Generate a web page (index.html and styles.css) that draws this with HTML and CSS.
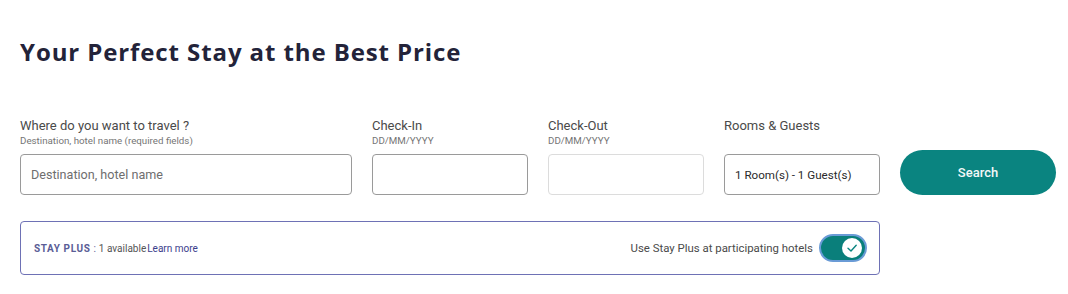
FILE: index.html
```html
<!DOCTYPE html>
<html>
<head>
<meta charset="utf-8">
<link rel="stylesheet" href="styles.css">
</head>
<body>
<div class="page">
  <h1 class="title">Your Perfect Stay at the Best Price</h1>
  <div class="form">
    <div class="field field-dest">
      <div class="label">Where do you want to travel ?</div>
      <div class="sub">Destination, hotel name (required fields)</div>
      <div class="input dark"><span class="ph">Destination, hotel name</span></div>
    </div>
    <div class="field">
      <div class="label">Check-In</div>
      <div class="sub">DD/MM/YYYY</div>
      <div class="input dark"></div>
    </div>
    <div class="field">
      <div class="label">Check-Out</div>
      <div class="sub">DD/MM/YYYY</div>
      <div class="input light"></div>
    </div>
    <div class="field">
      <div class="label">Rooms &amp; Guests</div>
      <div class="sub"></div>
      <div class="input dark"><span class="val">1 Room(s) - 1 Guest(s)</span></div>
    </div>
    <div class="field field-btn">
      <button class="search">Search</button>
    </div>
  </div>
  <div class="plus">
    <div class="plus-left">
      <span class="plus-name">STAY PLUS</span><span class="plus-colon">:</span><span class="plus-count">1 available</span><span class="plus-link">Learn more</span>
    </div>
    <div class="plus-right">
      <span class="plus-use">Use Stay Plus at participating hotels</span>
      <span class="toggle"><span class="knob"><svg width="14" height="14" viewBox="0 0 14 14"><path d="M3 7.2 L6 10 L11.2 4.2" fill="none" stroke="#0a8480" stroke-width="1.4" stroke-linecap="round" stroke-linejoin="round"/></svg></span></span>
    </div>
  </div>
</div>
</body>
</html>
```
FILE: styles.css
```css
* { box-sizing: border-box; }
html, body { margin: 0; background: #fff; }
body { font-family: Roboto, "Liberation Sans", sans-serif; }
.page { padding: 36px 20px 0 20px; }
.title {
  margin: 0;
  font-family: "Open Sans", "DejaVu Sans", sans-serif;
  font-weight: 700;
  font-size: 24px;
  line-height: 32px;
  color: #232339;
  letter-spacing: 0.9px;
}
.form {
  margin-top: 50px;
  display: grid;
  grid-template-columns: 332px 156px 156px 156px 156px;
  column-gap: 20px;
  align-items: end;
}
.field { display: flex; flex-direction: column; }
.label { font-size: 13px; line-height: 16px; color: #4a4a4a; }
.sub { font-size: 9.75px; line-height: 12px; color: #757575; height: 12px; margin-top: 1px; margin-bottom: 7px; }
.input {
  height: 41px;
  border-radius: 4px;
  background: #fff;
  display: flex;
  align-items: center;
  padding-left: 10px;
}
.input.dark { border: 1px solid #9a9a9a; }
.input.light { border: 1px solid #dcdcdc; }
.ph { font-size: 12.6px; color: #6e6e6e; }
.val { font-size: 11.6px; color: #2a2a2a; }
.search {
  height: 45px;
  width: 156px;
  border: none;
  border-radius: 23px;
  background: #0a8480;
  color: #f2f8f8;
  font-family: Roboto, "Liberation Sans", sans-serif;
  font-size: 13px;
  font-weight: 500;
  margin-bottom: 0;
}
.plus {
  margin-top: 26px;
  width: 860px;
  height: 54px;
  border: 1px solid #6e71b5;
  border-radius: 4px;
  display: flex;
  align-items: center;
  justify-content: space-between;
  padding: 0 12px 0 13px;
}
.plus-left { font-size: 10px; color: #555; }
.plus-name { font-weight: 700; letter-spacing: 0.6px; color: #5a5d96; }
.plus-colon { color: #5a5d96; margin: 0 3px; }
.plus-count { color: #555; margin-right: 1px; }
.plus-link { color: #3b3e8c; }
.plus-right { display: flex; align-items: center; gap: 6px; }
.plus-use { font-size: 11.4px; color: #4a4a4a; }
.toggle {
  width: 48px;
  height: 28px;
  border-radius: 14px;
  background: #0a7f7b;
  border: 2px solid #6a9bd6;
  display: flex;
  align-items: center;
  justify-content: flex-end;
  padding-right: 3px;
}
.knob {
  width: 20px;
  height: 20px;
  border-radius: 50%;
  background: #fff;
  display: flex;
  align-items: center;
  justify-content: center;
}
```
